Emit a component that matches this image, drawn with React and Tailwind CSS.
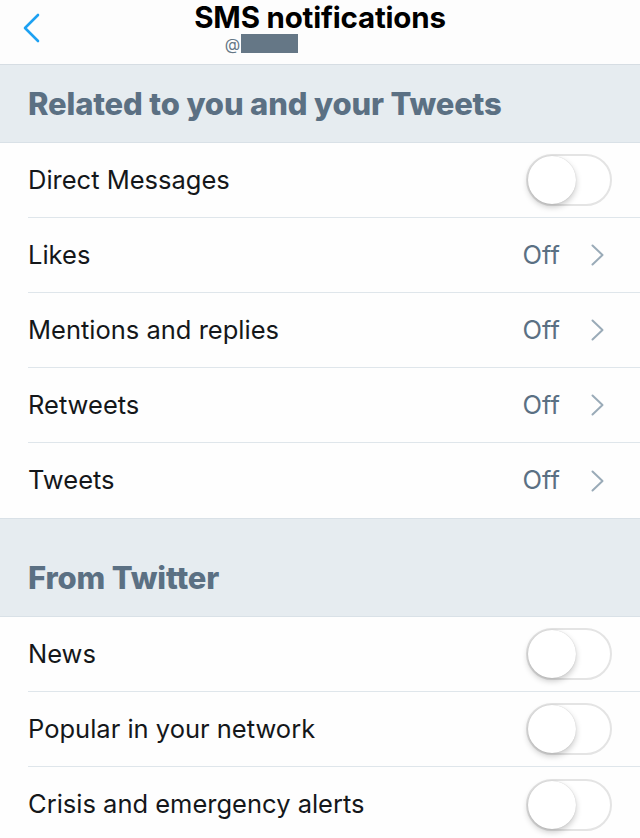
import React, { useState } from 'react';

const font = { fontFamily: 'Inter, "Liberation Sans", sans-serif' };

const Toggle = ({ on, onChange }) => (
	<button
		type="button"
		onClick={onChange}
		className={
			'relative w-[86px] h-[52px] rounded-full border-2 ' +
			(on ? 'bg-[#1da1f2] border-[#1da1f2]' : 'bg-white border-[#e4e4e4]')
		}>
		<span
			className={
				'absolute top-[0px] w-[48px] h-[48px] rounded-full bg-white shadow-[0_3px_6px_rgba(0,0,0,0.22),0_0_1px_rgba(0,0,0,0.2)] ' +
				(on ? 'left-[34px]' : 'left-[0px]')
			}
		/>
	</button>
);

const Chevron = () => (
	<svg width="13" height="22" viewBox="0 0 13 22" fill="none">
		<path d="M1.5 1.5 L11.5 11 L1.5 20.5" stroke="#9aabb8" strokeWidth="2" strokeLinecap="round" strokeLinejoin="round" />
	</svg>
);

const SectionHeader = ({ title, h }) => (
	<div className={'flex items-center px-[28px] bg-[#e6ecf0] border-b border-[#d9e1e7] ' + h}>
		<h2 className="text-[31px] font-extrabold text-[#5b7083] pt-[2px] tracking-[-0.15px]">{title}</h2>
	</div>
);

const Row = ({ label, last, children }) => (
	<div className="flex items-center h-[75px] pl-[28px] bg-[#fefefe]">
		<div className={'flex items-center w-full h-full pr-[28px] ' + (last ? '' : 'border-b border-[#dfe6eb]')}>
			<span className="flex-1 text-[25.5px] text-[#14171a]">{label}</span>
			{children}
		</div>
	</div>
);

const OffRow = ({ label, last }) => (
	<Row label={label} last={last}>
		<span className="text-[25.5px] text-[#5b7083] mr-[31px]">Off</span>
		<span className="mr-[8px] flex">
			<Chevron />
		</span>
	</Row>
);

const App = () => {
	const [toggles, setToggles] = useState({
		dm: false,
		news: false,
		popular: false,
		crisis: false,
	});
	const flip = (k) => setToggles({ ...toggles, [k]: !toggles[k] });

	return (
		<div className="w-[640px] h-[838px] overflow-hidden bg-[#fefefe]" style={font}>
			{/* nav bar */}
			<div className="relative h-[65px] flex flex-col items-center border-b border-[#d6dde3] bg-[#fdfdfd]">
				<button className="absolute left-[18px] top-[12px]">
					<svg width="26" height="32" viewBox="0 0 26 32" fill="none">
						<path d="M20 3 L7 16 L20 29" stroke="#1da1f2" strokeWidth="2.6" strokeLinecap="round" strokeLinejoin="round" />
					</svg>
				</button>
				<h1 className="text-[29.5px] font-bold text-black leading-[34px] tracking-[-0.2px]">SMS notifications</h1>
				<div className="flex items-center mt-[0px] mr-[117px] text-[#657786] text-[16px] leading-none">
					<span>@</span>
					<span className="inline-block w-[57px] h-[19px] bg-[#657786] ml-[1px]" />
				</div>
			</div>

			<SectionHeader title="Related to you and your Tweets" h="h-[78px]" />
			<Row label="Direct Messages">
				<Toggle on={toggles.dm} onChange={() => flip('dm')} />
			</Row>
			<OffRow label="Likes" />
			<OffRow label="Mentions and replies" />
			<OffRow label="Retweets" />
			<OffRow label="Tweets" last />

			<div className="border-t border-[#d9e1e7]">
				<SectionHeader title="From Twitter" h="h-[98px] pt-[20px]" />
			</div>
			<Row label="News">
				<Toggle on={toggles.news} onChange={() => flip('news')} />
			</Row>
			<Row label="Popular in your network">
				<Toggle on={toggles.popular} onChange={() => flip('popular')} />
			</Row>
			<Row label="Crisis and emergency alerts" last>
				<Toggle on={toggles.crisis} onChange={() => flip('crisis')} />
			</Row>
		</div>
	);
};

export default App;
